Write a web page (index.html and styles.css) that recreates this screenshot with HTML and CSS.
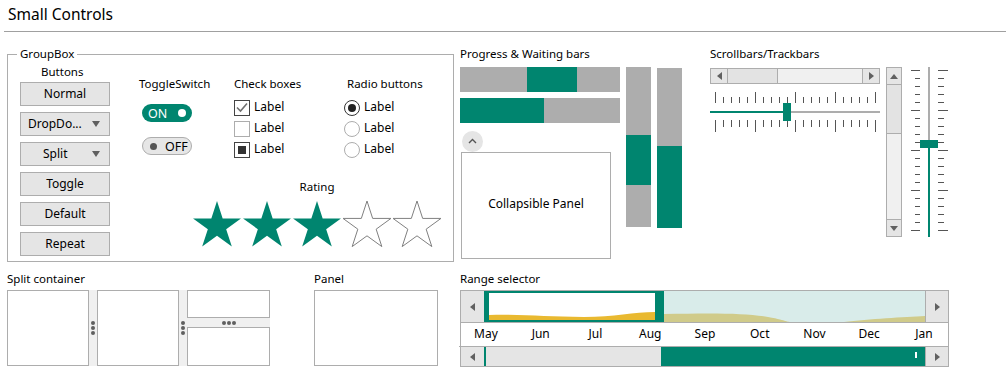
FILE: index.html
```html
<!DOCTYPE html>
<html>
<head>
  <title>Small Controls</title>
  <link rel="stylesheet" href="styles.css">
</head>
<body>
  <!-- Page header -->
  <div class="header">Small Controls</div>

  <!-- Top row: group box, progress bars, scrollbars -->
  <div class="top-row">
    <fieldset class="groupbox">
      <legend>GroupBox</legend>
      <div class="gb-body">
        <div class="buttons-col">
          <div class="buttons-label">Buttons</div>
          <button class="btn">Normal</button>
          <button class="btn btn-drop"><span>DropDo...</span><i class="caret"></i></button>
          <button class="btn btn-split"><span>Split</span><i class="caret"></i></button>
          <button class="btn">Toggle</button>
          <button class="btn">Default</button>
          <button class="btn">Repeat</button>
        </div>

        <div class="gb-right">
          <div class="gb-cols">
            <div class="toggle-col">
              <div class="col-label">ToggleSwitch</div>
              <div class="toggle on">ON<span class="knob"></span></div>
              <div class="toggle off"><span class="knob"></span>OFF</div>
            </div>

            <div class="check-col">
              <div class="col-label">Check boxes</div>
              <div class="opt first">
                <span class="box dark">
                  <svg width="14" height="14" viewBox="0 0 14 14"><path d="M2 6.5 L5.5 10 L12 2.5" fill="none" stroke="#707070" stroke-width="1.6"/></svg>
                </span><span class="txt">Label</span>
              </div>
              <div class="opt"><span class="box"></span><span class="txt">Label</span></div>
              <div class="opt"><span class="box dark"><span class="mixed"></span></span><span class="txt">Label</span></div>
            </div>

            <div class="radio-col">
              <div class="col-label radio-label">Radio buttons</div>
              <div class="opt first"><span class="radio dark"><span class="dot"></span></span><span class="txt">Label</span></div>
              <div class="opt"><span class="radio"></span><span class="txt">Label</span></div>
              <div class="opt"><span class="radio"></span><span class="txt">Label</span></div>
            </div>
          </div>

          <div class="rating">
            <div class="col-label">Rating</div>
            <svg class="star-defs" width="0" height="0">
              <defs>
                <polygon id="star" points="24,0 29.66,17.41 47.97,17.41 33.16,28.18 38.82,45.59 24,34.83 9.18,45.59 14.84,28.18 0.03,17.41 18.34,17.41"/>
              </defs>
            </svg>
            <div class="stars">
              <svg width="50" height="48" viewBox="-1 -1 50 48"><use href="#star" class="star-full"/></svg>
              <svg width="50" height="48" viewBox="-1 -1 50 48"><use href="#star" class="star-full"/></svg>
              <svg width="50" height="48" viewBox="-1 -1 50 48"><use href="#star" class="star-full"/></svg>
              <svg width="50" height="48" viewBox="-1 -1 50 48"><use href="#star" class="star-empty"/></svg>
              <svg width="50" height="48" viewBox="-1 -1 50 48"><use href="#star" class="star-empty"/></svg>
            </div>
          </div>
        </div>
      </div>
    </fieldset>

    <!-- Progress & waiting bars -->
    <div class="progress-sec">
      <div class="sec-label">Progress &amp; Waiting bars</div>
      <div class="prog-body">
        <div class="prog-left">
          <div class="hbar"><div class="fill" style="margin-left:67px;width:50px"></div></div>
          <div class="hbar"><div class="fill" style="width:84px"></div></div>
          <div class="collapse-btn">
            <svg width="21" height="21" viewBox="0 0 21 21"><path d="M7 12 L10.5 8.5 L14 12" fill="none" stroke="#555" stroke-width="1.4"/></svg>
          </div>
          <div class="collapsible">Collapsible Panel</div>
        </div>
        <div class="vbar"><div class="fill" style="margin-top:68px;height:50px"></div></div>
        <div class="vbar second"><div class="fill" style="margin-top:78px;height:82px"></div></div>
      </div>
    </div>

    <!-- Scrollbars / trackbars -->
    <div class="scroll-sec">
      <div class="sec-label">Scrollbars/Trackbars</div>
      <div class="scroll-body">
        <div class="scroll-left">
          <div class="hscroll">
            <div class="sb-btn"><i class="arr-left"></i></div>
            <div class="sb-thumb"></div>
            <div class="sb-space"></div>
            <div class="sb-btn right"><i class="arr-right"></i></div>
          </div>
          <div class="htrack">
            <div class="ticks-top"></div>
            <div class="track-line"></div>
            <div class="ticks-bottom"></div>
            <div class="thumb"></div>
          </div>
        </div>

        <div class="vscroll">
          <div class="sb-btn"><i class="arr-up"></i></div>
          <div class="sb-thumb"></div>
          <div class="sb-space"></div>
          <div class="sb-btn down"><i class="arr-down"></i></div>
        </div>

        <div class="vtrack">
          <div class="vticks-left"></div>
          <div class="vline"></div>
          <div class="vticks-right"></div>
          <div class="thumb"></div>
        </div>
      </div>
    </div>
  </div>

  <!-- Bottom row: split container, panel, range selector -->
  <div class="bottom-row">
    <div class="split-sec">
      <div class="sec-label">Split container</div>
      <div class="split">
        <div class="pane"></div>
        <div class="splitter-v"><span class="dots col"><i></i><i></i><i></i></span></div>
        <div class="pane"></div>
        <div class="splitter-v"><span class="dots col"><i></i><i></i><i></i></span></div>
        <div class="split-right">
          <div class="pane top"></div>
          <div class="splitter-h"><span class="dots"><i></i><i></i><i></i></span></div>
          <div class="pane bottom"></div>
        </div>
      </div>
    </div>

    <div class="panel-sec">
      <div class="sec-label">Panel</div>
      <div class="panel"></div>
    </div>

    <div class="range-sec">
      <div class="sec-label">Range selector</div>
      <div class="range">
        <div class="rs-row rs-chart-row">
          <div class="rs-btn"><i class="arr-left"></i></div>
          <svg class="rs-chart" width="441" height="31" viewBox="0 0 441 31">
            <rect width="441" height="31" fill="#d9ecea"/>
            <path d="M180 23 C230 22 262 22 284 26 S300 31 310 31 L360 31 C385 28 420 26 441 25 V31 H180 Z" fill="#d0cb8a"/>
            <rect x="0" y="0" width="180" height="31" fill="#fff"/>
            <path d="M5 24 C40 23 62 26 100 26 C130 26 150 21 171 21 V29 H5 Z" fill="#e9b930"/>
            <rect x="0" y="0" width="5" height="31" fill="#00856f"/>
            <rect x="171" y="0" width="9" height="31" fill="#00856f"/>
            <rect x="0" y="0" width="180" height="2" fill="#00856f"/>
            <rect x="0" y="29" width="180" height="2" fill="#00856f"/>
          </svg>
          <div class="rs-btn right"><i class="arr-right"></i></div>
        </div>
        <div class="rs-axis">
          <span>May</span><span>Jun</span><span>Jul</span><span>Aug</span><span>Sep</span><span>Oct</span><span>Nov</span><span>Dec</span><span>Jan</span>
        </div>
        <div class="rs-row rs-scroll-row">
          <div class="rs-btn"><i class="arr-left"></i></div>
          <div class="rs-track">
            <div class="rs-start"></div>
            <div class="rs-sel" style="margin-left:175px"><span class="rs-mark"></span></div>
          </div>
          <div class="rs-btn right"><i class="arr-right"></i></div>
        </div>
      </div>
    </div>
  </div>
</body>
</html>
```

FILE: styles.css
```css
/* General page */
body {
  margin: 0;
  font-family: "Noto Sans", sans-serif;
  font-size: 11.5px;
  color: #000;
  background: #fff;
}

.header {
  margin-left: 4px;
  padding-left: 4px;
  height: 31px;
  line-height: 28px;
  font-size: 15.5px;
  border-bottom: 1px solid #a0a0a0;
}

.sec-label, .col-label {
  line-height: 16px;
  white-space: nowrap;
}

/* Top row */
.top-row {
  display: flex;
  align-items: flex-start;
  height: 230px;
  padding-left: 7px;
}

/* Group box */
.groupbox {
  margin: 14px 0 0 0;
  padding: 0;
  width: 447px;
  height: 216px;
  box-sizing: border-box;
  border: 1px solid #adadad;
  min-width: 0;
}

.groupbox legend {
  margin-left: 9px;
  padding: 0 3px;
  line-height: 16px;
}

.gb-body {
  display: flex;
  padding-left: 12px;
}

.buttons-col {
  display: flex;
  flex-direction: column;
  width: 90px;
}

.buttons-label {
  line-height: 16px;
  margin: 2px 0 2px;
  padding-left: 21px;
}

.btn {
  height: 24px;
  margin: 0 0 6px;
  padding: 0 0 2px;
  font: inherit;
  font-size: 12px;
  color: #000;
  background: #e5e5e5;
  border: 1px solid #adadad;
  display: flex;
  align-items: center;
  justify-content: center;
}

.btn-drop, .btn-split {
  justify-content: space-between;
  padding: 0 9px 2px 7px;
}

.btn-split {
  padding-left: 22px;
}

.caret {
  width: 0;
  height: 0;
  margin-top: 2px;
  border-left: 4px solid transparent;
  border-right: 4px solid transparent;
  border-top: 6px solid #606060;
}

.gb-right {
  margin-left: 29px;
  padding-top: 14px;
}

.gb-cols {
  display: flex;
}

.toggle-col { width: 95px; }
.check-col { width: 110px; }
.radio-label { padding-left: 3px; }

/* Toggle switch */
.toggle {
  width: 50px;
  height: 18px;
  margin-left: 3px;
  border-radius: 9px;
  box-sizing: border-box;
  display: flex;
  align-items: center;
  font-size: 12.5px;
}

.toggle.on {
  margin-top: 12px;
  padding: 0 6px 0 6px;
  justify-content: space-between;
  background: #00856f;
  color: #fff;
}

.toggle.on .knob {
  width: 8px;
  height: 8px;
  border-radius: 50%;
  background: #fff;
}

.toggle.off {
  margin-top: 15px;
  padding-left: 7px;
  gap: 8px;
  background: #e6e6e6;
  border: 1px solid #adadad;
}

.toggle.off .knob {
  width: 7px;
  height: 7px;
  border-radius: 50%;
  background: #555;
}

/* Check boxes and radio buttons */
.opt {
  display: flex;
  align-items: center;
  height: 16px;
  margin-top: 5px;
  gap: 4px;
  font-size: 12px;
}

.opt .txt { margin-bottom: 3px; }

.opt.first { margin-top: 8px; }

.box, .radio {
  width: 16px;
  height: 16px;
  box-sizing: border-box;
  border: 1px solid #adadad;
  background: #fff;
  display: flex;
  align-items: center;
  justify-content: center;
}

.radio { border-radius: 50%; }

.box.dark { border-color: #444; }
.radio.dark { border-color: #333; }

.mixed {
  width: 8px;
  height: 8px;
  background: #333;
}

.radio .dot {
  width: 8px;
  height: 8px;
  border-radius: 50%;
  background: #222;
}

/* Rating */
.rating {
  margin: 21px 0 0 53px;
  width: 250px;
  text-align: center;
}

.star-defs {
  display: block;
  position: absolute;
}

.stars {
  display: flex;
  margin-top: 5px;
}

.star-full { fill: #00856f; }

.star-empty {
  fill: #fff;
  stroke: #808080;
  stroke-width: 1;
}

/* Progress & waiting bars */
.progress-sec {
  margin-left: 6px;
  padding-top: 14px;
}

.prog-body {
  display: flex;
  gap: 6px;
  margin-top: 5px;
}

.prog-left { width: 160px; }

.hbar {
  height: 25px;
  background: #adadad;
  display: flex;
}

.hbar + .hbar { margin-top: 6px; }

.fill { background: #00856f; }

.collapse-btn {
  width: 21px;
  height: 21px;
  margin: 8px 0 0 2px;
  border-radius: 50%;
  background: #e5e5e5;
}

.collapse-btn svg { display: block; }

.collapsible {
  width: 150px;
  height: 107px;
  margin-left: 1px;
  padding-bottom: 4px;
  box-sizing: border-box;
  border: 1px solid #adadad;
  display: flex;
  align-items: center;
  justify-content: center;
  font-size: 12px;
}

.vbar {
  width: 25px;
  height: 160px;
  background: #adadad;
}

.vbar.second { margin-top: 1px; }

/* Scrollbars / trackbars */
.scroll-sec {
  margin-left: 28px;
  padding-top: 14px;
}

.scroll-body {
  display: flex;
  align-items: flex-start;
  margin-top: 5px;
}

.scroll-left { width: 170px; }

.hscroll, .vscroll {
  display: flex;
  box-sizing: border-box;
  border: 1px solid #adadad;
  background: #f0f0f0;
}

.hscroll {
  width: 170px;
  height: 16px;
  margin-top: 1px;
}

.vscroll {
  flex-direction: column;
  width: 16px;
  height: 170px;
  margin-left: 6px;
}

.sb-btn {
  background: #e5e5e5;
  display: flex;
  align-items: center;
  justify-content: center;
}

.hscroll .sb-btn { width: 16px; border-right: 1px solid #adadad; }
.hscroll .sb-btn.right { border-right: 0; border-left: 1px solid #adadad; }
.hscroll .sb-thumb { width: 49px; background: #e3e3e3; border-right: 1px solid #adadad; }

.vscroll .sb-btn { height: 16px; border-bottom: 1px solid #adadad; }
.vscroll .sb-btn.down { border-bottom: 0; border-top: 1px solid #adadad; }
.vscroll .sb-thumb { height: 48px; background: #e3e3e3; border-bottom: 1px solid #adadad; }

.sb-space { flex: 1; }

.arr-left, .arr-right, .arr-up, .arr-down {
  width: 0;
  height: 0;
  border: 4px solid transparent;
}

.arr-left { border-right: 5px solid #606060; border-left: 0; }
.arr-right { border-left: 5px solid #606060; border-right: 0; }
.arr-up { border-bottom: 5px solid #606060; border-top: 0; }
.arr-down { border-top: 5px solid #606060; border-bottom: 0; }

/* Horizontal trackbar */
.htrack {
  position: relative;
  margin-top: 8px;
}

.ticks-top {
  height: 11px;
  background:
    repeating-linear-gradient(to right, #555 0 1px, transparent 1px 40px) 5px 0 / 161px 11px no-repeat,
    repeating-linear-gradient(to right, #555 0 1px, transparent 1px 8px) 5px 5px / 161px 6px no-repeat;
}

.track-line {
  height: 2px;
  margin-top: 8px;
  background: linear-gradient(to right, #00856f 0 75px, #adadad 75px);
}

.ticks-bottom {
  height: 12px;
  margin-top: 7px;
  background:
    repeating-linear-gradient(to right, #555 0 1px, transparent 1px 40px) 5px 0 / 161px 12px no-repeat,
    repeating-linear-gradient(to right, #555 0 1px, transparent 1px 8px) 5px 0 / 161px 7px no-repeat;
}

.htrack .thumb {
  position: absolute;
  left: 73px;
  top: 11px;
  width: 8px;
  height: 18px;
  background: #00856f;
}

/* Vertical trackbar */
.vtrack {
  position: relative;
  display: flex;
  height: 170px;
  margin-left: 9px;
}

.vticks-left {
  width: 9px;
  background:
    repeating-linear-gradient(to bottom, #555 0 1px, transparent 1px 40px) 0 3px / 9px 161px no-repeat,
    repeating-linear-gradient(to bottom, #555 0 1px, transparent 1px 8px) 4px 3px / 5px 161px no-repeat;
}

.vline {
  width: 2px;
  margin: 0 8px;
  background: linear-gradient(to bottom, #adadad 0 75px, #00856f 75px);
}

.vticks-right {
  width: 10px;
  background:
    repeating-linear-gradient(to bottom, #555 0 1px, transparent 1px 40px) 0 3px / 10px 161px no-repeat,
    repeating-linear-gradient(to bottom, #555 0 1px, transparent 1px 8px) 0 3px / 6px 161px no-repeat;
}

.vtrack .thumb {
  position: absolute;
  left: 9px;
  top: 73px;
  width: 18px;
  height: 8px;
  background: #00856f;
}

/* Bottom row */
.bottom-row {
  display: flex;
  align-items: flex-start;
  padding-left: 7px;
  margin-top: 9px;
}

.split {
  display: flex;
  height: 76px;
  margin-top: 3px;
}

.pane {
  width: 82px;
  box-sizing: border-box;
  border: 1px solid #adadad;
}

.splitter-v {
  width: 8px;
  background: #f0f0f0;
  display: flex;
  align-items: center;
  justify-content: center;
}

.split-right {
  display: flex;
  flex-direction: column;
  width: 83px;
}

.split-right .pane { width: 83px; }
.split-right .pane.top { height: 28px; }
.split-right .pane.bottom { height: 39px; }

.splitter-h {
  height: 9px;
  background: #f0f0f0;
  display: flex;
  align-items: center;
  justify-content: center;
}

.dots {
  display: flex;
  gap: 1px;
}

.dots.col { flex-direction: column; }

.dots i {
  width: 4px;
  height: 4px;
  border-radius: 50%;
  background: #606060;
}

.panel-sec { margin-left: 44px; }

.panel {
  width: 124px;
  height: 76px;
  margin-top: 3px;
  box-sizing: border-box;
  border: 1px solid #adadad;
}

/* Range selector */
.range-sec { margin-left: 22px; }

.range {
  width: 489px;
  margin-top: 3px;
  box-sizing: border-box;
  border: 1px solid #adadad;
}

.rs-row {
  display: flex;
}

.rs-chart-row {
  height: 31px;
  border-bottom: 1px solid #adadad;
}

.rs-chart { display: block; }

.rs-btn {
  width: 23px;
  background: #e5e5e5;
  display: flex;
  align-items: center;
  justify-content: center;
}

.rs-btn.right {
  width: 22px;
  border-left: 1px solid #adadad;
}

.rs-axis {
  display: grid;
  grid-template-columns: repeat(9, 54.75px);
  height: 23px;
  margin-left: -2.4px;
  line-height: 22px;
  font-size: 12px;
  text-align: center;
  border-bottom: 1px solid #adadad;
}

.rs-scroll-row { height: 19px; }

.rs-track {
  width: 441px;
  display: flex;
  background: #e5e5e5;
}

.rs-start {
  width: 2px;
  background: #00856f;
}

.rs-sel {
  flex: 1;
  display: flex;
  justify-content: flex-end;
  padding: 5px 8px 0 0;
  background: #00856f;
}

.rs-mark {
  width: 2px;
  height: 6px;
  background: #fff;
}
```
